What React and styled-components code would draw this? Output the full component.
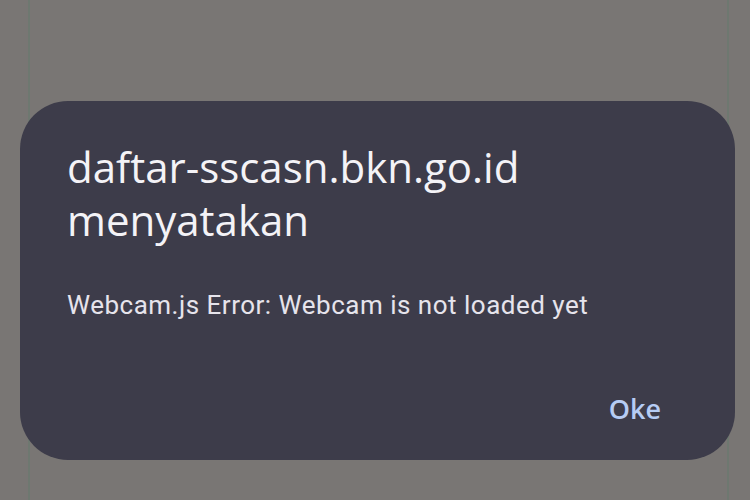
import React from "react";
import styled, { createGlobalStyle } from "styled-components";

const Global = createGlobalStyle`
  html, body { margin: 0; padding: 0; }
  body { width: 750px; height: 500px; overflow: hidden; background: #797674; }
`;

const Screen = styled.div`
  position: relative;
  width: 750px;
  height: 500px;
  background: #797674;
  padding-top: 101px;
  padding-left: 20px;
  box-sizing: border-box;
`;

const Rule = styled.div`
  position: absolute;
  top: 0;
  bottom: 0;
  left: ${(p) => p.x}px;
  width: 2px;
  background: #6e7870;
`;

const Dialog = styled.div`
  position: relative;
  width: 715px;
  height: 359px;
  background: #3d3c4a;
  border-radius: 48px;
  box-sizing: border-box;
  padding: 39px 40px 0 47px;
  display: flex;
  flex-direction: column;
`;

const Title = styled.h1`
  margin: 0;
  font-family: "Open Sans", sans-serif;
  font-weight: 400;
  font-size: 42px;
  line-height: 53px;
  color: #f4f3f7;
  white-space: nowrap;
`;

const Message = styled.p`
  margin: 43px 0 0;
  font-family: Roboto, sans-serif;
  font-size: 26px;
  line-height: 32px;
  letter-spacing: 0.5px;
  color: #e6e4ec;
  white-space: nowrap;
`;

const Actions = styled.div`
  margin-top: auto;
  margin-bottom: 33px;
  display: flex;
  justify-content: flex-end;
`;

const Button = styled.button`
  background: transparent;
  border: none;
  padding: 0 34px 0 0;
  font-family: "Open Sans", sans-serif;
  font-weight: 600;
  font-size: 27px;
  color: #b6ccf4;
  cursor: pointer;
`;

export default function App() {
  return (
    <>
      <Global />
      <Screen>
        <Rule x={28} />
        <Rule x={727} />
        <Dialog>
          <Title>
            daftar-sscasn.bkn.go.id
            <br />
            menyatakan
          </Title>
          <Message>Webcam.js Error: Webcam is not loaded yet</Message>
          <Actions>
            <Button>Oke</Button>
          </Actions>
        </Dialog>
      </Screen>
    </>
  );
}
